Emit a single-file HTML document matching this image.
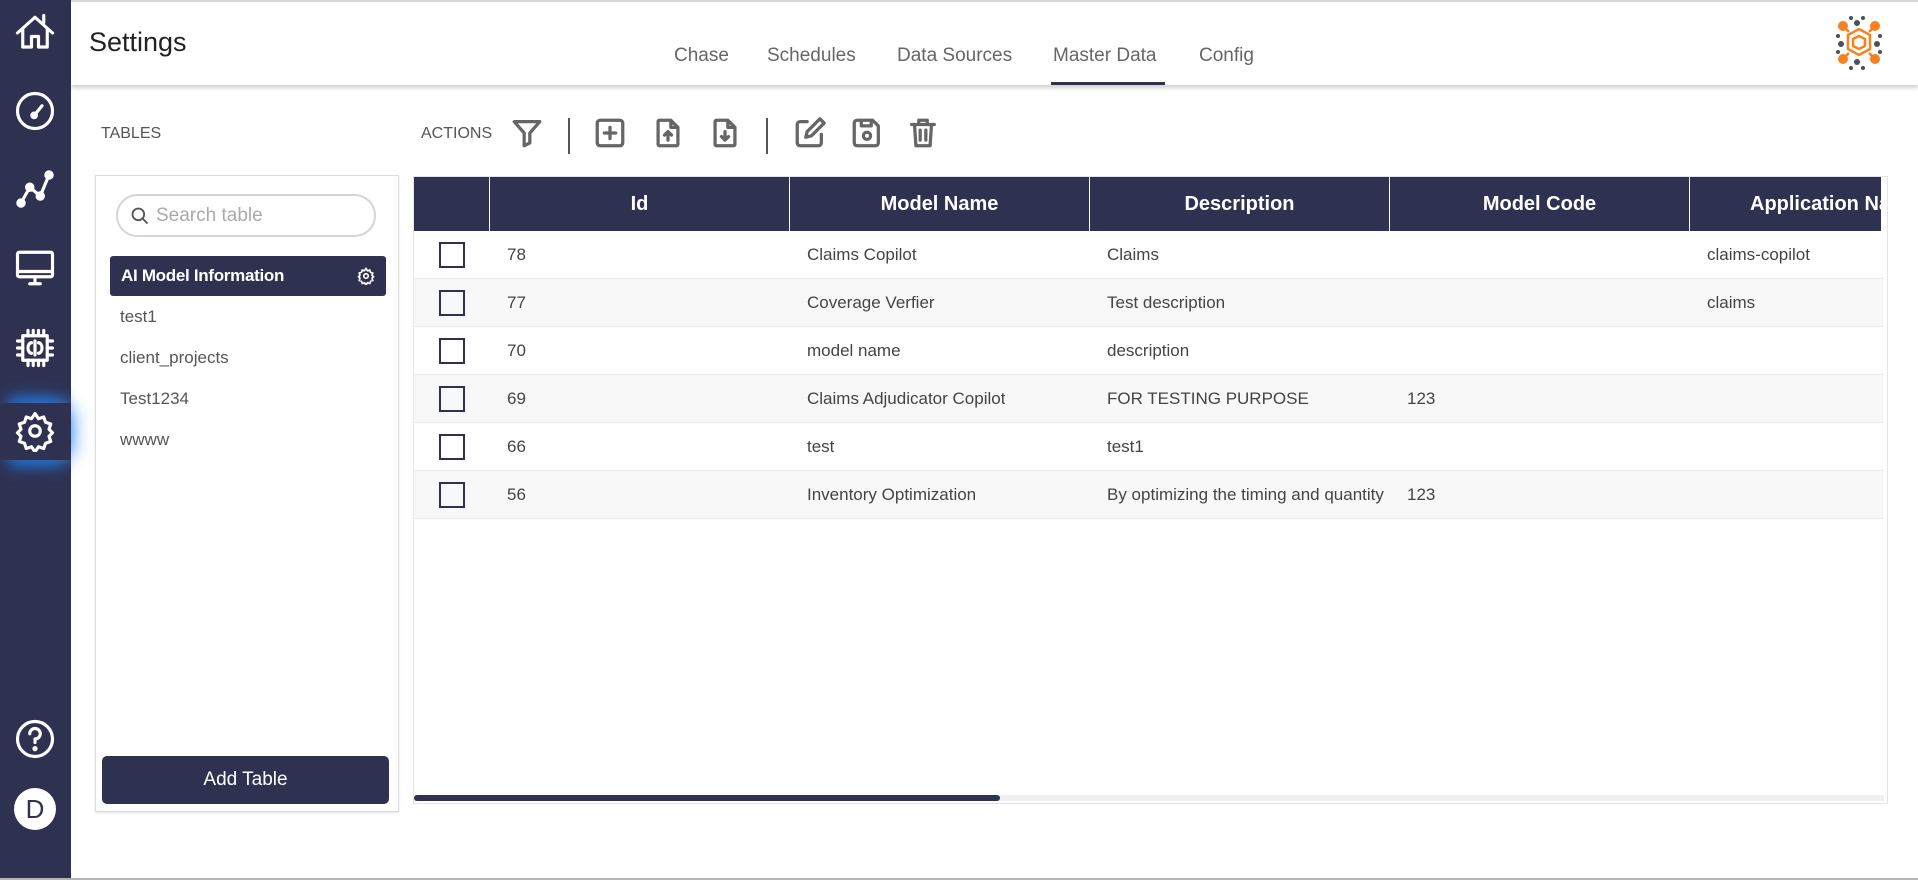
<!DOCTYPE html>
<html><head><meta charset="utf-8"><style>
*{box-sizing:border-box;margin:0;padding:0}
body{width:1918px;height:880px;position:relative;background:#fff;font-family:"Liberation Sans",sans-serif;overflow:hidden;color:#444}
.side{position:absolute;left:0;top:0;width:71px;height:878px;background:#2f3150}
.side svg{position:absolute;left:14px;width:42px;height:42px;stroke:#fff;fill:none;stroke-width:1.8;stroke-linecap:round;stroke-linejoin:round}
.act{position:absolute;left:0;top:403px;width:71px;height:57px;background:#2f3150;box-shadow:0 -14px 16px -8px #1d6fd6,0 14px 16px -8px #1d6fd6,10px 0 18px -6px #7fb6ff}
.bot{position:absolute;left:0;top:878px;width:1918px;height:2px;background:#b4b4b4}
.hdr{position:absolute;left:71px;top:0;right:0;height:85px;border-top:2px solid #d8d8d8;box-shadow:0 3px 4px rgba(0,0,0,.18)}
.title{position:absolute;left:89px;top:27px;font-size:27px;color:#222}
.tab{position:absolute;top:45px;font-size:19px;color:#666}
.ul{position:absolute;left:1051px;top:82px;width:114px;height:3px;background:#2f3150}
.lbl{position:absolute;font-size:16px;color:#555}
.panel{position:absolute;left:95px;top:175px;width:304px;height:637px;border:1px solid #ddd;box-shadow:0 1px 2px rgba(0,0,0,.1)}
.search{position:absolute;left:116px;top:194px;width:260px;height:43px;border:2px solid #d5d5d5;border-radius:22px}
.search span{position:absolute;left:38px;top:9px;font-size:19px;color:#aaa}
.sel{position:absolute;left:110px;top:256px;width:276px;height:40px;background:#2f3150;border-radius:3px;color:#fff;font-weight:bold;font-size:17px;padding:10px 11px;letter-spacing:-.3px}
.it{position:absolute;left:120px;font-size:17px;color:#555}
.btn{position:absolute;left:102px;top:756px;width:287px;height:48px;background:#2f3150;border-radius:5px;color:#fff;font-size:19px;text-align:center;line-height:48px}
.tbl{position:absolute;left:413px;top:176px;width:1475px;height:628px;border:1px solid #e4e4e4;overflow:hidden}
.th{position:absolute;top:0;height:54px;background:#2f3150;color:#fff;font-weight:bold;font-size:20px;text-align:center;line-height:54px;border-left:1px solid #fff;white-space:nowrap;overflow:hidden}
.row{position:absolute;left:0;width:1470px;height:48px;border-bottom:1px solid #ececec}
.row.a{background:#f8f8f8}
.cb{position:absolute;left:25px;top:11px;width:26px;height:26px;border:2.5px solid #2f3150}
.c{position:absolute;top:14px;font-size:17px;color:#444;white-space:nowrap;overflow:hidden}
.ic{position:absolute;top:116px;width:34px;height:34px;stroke:#666;fill:none;stroke-width:2.3;stroke-linecap:round;stroke-linejoin:round}
.sep{position:absolute;top:118px;width:2px;height:36px;background:#555}
</style></head><body>
<div class="side">
<svg style="top:12px" viewBox="0 0 24 24"><path d="M2 12L12 3l10 9M5 10v10h5v-6h4v6h5V10M17 6V2"/></svg>
<svg style="top:90px" viewBox="0 0 24 24"><circle cx="12" cy="12" r="10"/><path d="M12 14l4-5"/><circle cx="11.5" cy="14.5" r="1.3" fill="#fff"/></svg>
<svg style="top:168px" viewBox="0 0 24 24"><path d="M4 20l5-9 6 5 5-12"/><circle cx="4" cy="20" r="1.8" fill="#fff"/><circle cx="9" cy="11" r="1.8" fill="#fff"/><circle cx="15" cy="16" r="1.8" fill="#fff"/><circle cx="20" cy="4" r="1.8" fill="#fff"/></svg>
<svg style="top:247px" viewBox="0 0 24 24"><rect x="2" y="3" width="20" height="14" rx="1"/><path d="M2 14h20M9 21h6M12 17v4"/></svg>
<svg style="top:327px" viewBox="0 0 24 24"><rect x="5" y="5" width="14" height="14"/><path d="M8 2v3M11 2v3M14 2v3M17 2v3M8 19v3M11 19v3M14 19v3M17 19v3M2 8h3M2 12h3M2 16h3M19 8h3M19 12h3M19 16h3M12 8v8M10 9a2 3 0 0 0 0 6M14 9a2 3 0 0 1 0 6"/></svg>
<div class="act"></div>
<svg style="top:410px;z-index:2" viewBox="0 0 24 24"><circle cx="12" cy="12" r="3"/><path d="M12 2l2 3 3-1 1 3 3 1-1 3 2 2-2 2 1 3-3 1-1 3-3-1-2 3-2-3-3 1-1-3-3-1 1-3-2-2 2-2-1-3 3-1 1-3 3 1z"/></svg>
<svg style="top:718px" viewBox="0 0 24 24"><circle cx="12" cy="12" r="10"/><path d="M9 9a3 3 0 1 1 3 3v2"/><circle cx="12" cy="17.5" r=".6" fill="#fff"/></svg>
<div style="position:absolute;left:14px;top:788px;width:42px;height:42px;border-radius:50%;background:#fff;color:#2f3150;font-size:26px;text-align:center;line-height:42px">D</div>
</div>
<div class="bot"></div>
<div class="hdr"></div>
<div class="title">Settings</div>
<div class="tab" style="left:674px">Chase</div>
<div class="tab" style="left:767px">Schedules</div>
<div class="tab" style="left:897px">Data Sources</div>
<div class="tab" style="left:1053px">Master Data</div>
<div class="tab" style="left:1199px">Config</div>
<div class="ul"></div>
<svg style="position:absolute;left:1835px;top:14px" width="52" height="56" viewBox="0 0 52 56">
<g fill="#4a4f5a"><circle cx="16" cy="4" r="2"/><circle cx="28" cy="4" r="2"/><circle cx="22" cy="9" r="3"/><circle cx="3" cy="22" r="2"/><circle cx="6" cy="30" r="3"/><circle cx="3" cy="38" r="2"/><circle cx="45" cy="22" r="2"/><circle cx="42" cy="30" r="3"/><circle cx="45" cy="38" r="2"/><circle cx="22" cy="48" r="3"/><circle cx="16" cy="54" r="2"/><circle cx="28" cy="54" r="2"/></g>
<g fill="#f5821f"><circle cx="8" cy="12" r="5"/><circle cx="40" cy="12" r="5"/><circle cx="8" cy="45" r="5"/><circle cx="40" cy="45" r="5"/></g>
<g stroke="#f5821f" stroke-width="2.5" fill="none"><path d="M24 15l11 6v14l-11 6-11-6V21z"/><path d="M24 22l6 3v7l-6 3-6-3v-7z"/><path d="M8 12l6 6M40 12l-6 6M8 45l6-6M40 45l-6-6"/></g></svg>
<div class="lbl" style="left:101px;top:125px">TABLES</div>
<div class="lbl" style="left:421px;top:125px">ACTIONS</div>
<svg class="ic" style="left:510px" viewBox="0 0 24 24"><path d="M3 4h18l-7 8v7l-4 2v-9z"/></svg>
<div class="sep" style="left:568px"></div>
<svg class="ic" style="left:593px" viewBox="0 0 24 24"><rect x="3" y="3" width="18" height="18" rx="2"/><path d="M12 8v8M8 12h8"/></svg>
<svg class="ic" style="left:651px" viewBox="0 0 24 24"><path d="M6 3h8l5 5v12a1 1 0 0 1-1 1H6a1 1 0 0 1-1-1V4a1 1 0 0 1 1-1zM14 3v5h5M12 17v-6M9.5 13.5L12 11l2.5 2.5"/></svg>
<svg class="ic" style="left:708px" viewBox="0 0 24 24"><path d="M6 3h8l5 5v12a1 1 0 0 1-1 1H6a1 1 0 0 1-1-1V4a1 1 0 0 1 1-1zM14 3v5h5M12 11v6M9.5 14.5L12 17l2.5-2.5"/></svg>
<div class="sep" style="left:766px"></div>
<svg class="ic" style="left:793px" viewBox="0 0 24 24"><path d="M20 13v6a2 2 0 0 1-2 2H5a2 2 0 0 1-2-2V6a2 2 0 0 1 2-2h5M9 15l1-4 9-9 3 3-9 9z"/></svg>
<svg class="ic" style="left:850px" viewBox="0 0 24 24"><path d="M5 3h11l4 4v12a2 2 0 0 1-2 2H5a2 2 0 0 1-2-2V5a2 2 0 0 1 2-2zM8 3v4h7V3"/><circle cx="12" cy="14" r="2.5"/></svg>
<svg class="ic" style="left:906px" viewBox="0 0 24 24"><path d="M4 6h16M9 6V3h6v3M6 6l1 15h10l1-15M10 10v7M14 10v7"/></svg>
<div class="panel"></div>
<div class="search"><svg style="position:absolute;left:12px;top:10px" width="20" height="20" viewBox="0 0 24 24" fill="none" stroke="#555" stroke-width="2.2"><circle cx="10" cy="10" r="7"/><path d="M15 15l6 6"/></svg><span>Search table</span></div>
<div class="sel">AI Model Information<svg style="position:absolute;right:11px;top:11px" width="18" height="18" viewBox="0 0 24 24" fill="none" stroke="#fff" stroke-width="2.2"><circle cx="12" cy="12" r="3"/><path d="M12 2l2 3 3-1 1 3 3 1-1 3 2 2-2 2 1 3-3 1-1 3-3-1-2 3-2-3-3 1-1-3-3-1 1-3-2-2 2-2-1-3 3-1 1-3 3 1z"/></svg></div>
<div class="it" style="top:307px">test1</div>
<div class="it" style="top:348px">client_projects</div>
<div class="it" style="top:389px">Test1234</div>
<div class="it" style="top:430px">wwww</div>
<div class="btn">Add Table</div>
<div class="tbl">
<div class="th" style="left:0;width:75px;border-left:0"></div>
<div class="th" style="left:75px;width:300px">Id</div>
<div class="th" style="left:375px;width:300px">Model Name</div>
<div class="th" style="left:675px;width:300px">Description</div>
<div class="th" style="left:975px;width:300px">Model Code</div>
<div class="th" style="left:1275px;width:192px;text-align:left;padding-left:60px">Application Name</div>
<div class="th" style="left:1467px;width:8px;background:#fff"></div>
<div class="row" style="top:54px"><div class="cb"></div><div class="c" style="left:93px">78</div><div class="c" style="left:393px">Claims Copilot</div><div class="c" style="left:693px">Claims</div><div class="c" style="left:1293px">claims-copilot</div></div>
<div class="row a" style="top:102px"><div class="cb"></div><div class="c" style="left:93px">77</div><div class="c" style="left:393px">Coverage Verfier</div><div class="c" style="left:693px">Test description</div><div class="c" style="left:1293px">claims</div></div>
<div class="row" style="top:150px"><div class="cb"></div><div class="c" style="left:93px">70</div><div class="c" style="left:393px">model name</div><div class="c" style="left:693px">description</div></div>
<div class="row a" style="top:198px"><div class="cb"></div><div class="c" style="left:93px">69</div><div class="c" style="left:393px">Claims Adjudicator Copilot</div><div class="c" style="left:693px">FOR TESTING PURPOSE</div><div class="c" style="left:993px">123</div></div>
<div class="row" style="top:246px"><div class="cb"></div><div class="c" style="left:93px">66</div><div class="c" style="left:393px">test</div><div class="c" style="left:693px">test1</div></div>
<div class="row a" style="top:294px"><div class="cb"></div><div class="c" style="left:93px">56</div><div class="c" style="left:393px">Inventory Optimization</div><div class="c" style="left:693px;width:280px">By optimizing the timing and quantity</div><div class="c" style="left:993px">123</div></div>
<div style="position:absolute;left:0;top:618px;width:1470px;height:6px;background:#f0f0f0"></div>
<div style="position:absolute;left:0;top:618px;width:586px;height:6px;background:#2f3150;border-radius:3px"></div>
</div>
</body></html>
